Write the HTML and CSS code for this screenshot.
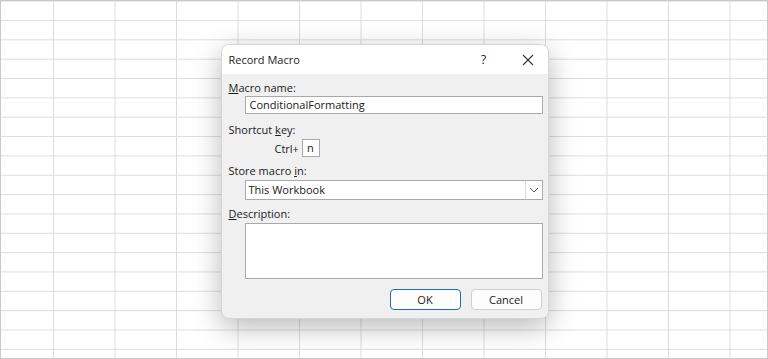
FILE: index.html
```html
<!DOCTYPE html>
<html lang="en">
<head>
    <meta charset="UTF-8">
    <meta name="viewport" content="width=device-width, initial-scale=1.0">
    <title>Record Macro</title>
    <link rel="stylesheet" href="styles.css">
</head>
<body>
    <div class="sheet">
        <!-- Record Macro dialog -->
        <div class="dialog">
            <div class="title-bar">
                <span class="title">Record Macro</span>
                <span class="help">?</span>
                <span class="close">
                    <svg width="12" height="12" viewBox="0 0 12 12">
                        <path d="M1 1 L11 11 M11 1 L1 11" stroke="#333" stroke-width="1.1" fill="none"/>
                    </svg>
                </span>
            </div>
            <div class="dialog-body">
                <label class="field-label"><u>M</u>acro name:</label>
                <div class="text-box">ConditionalFormatting</div>

                <label class="field-label gap">Shortcut <u>k</u>ey:</label>
                <div class="shortcut-row">
                    <span>Ctrl+</span>
                    <div class="key-box">n</div>
                </div>

                <label class="field-label gap-sm">Store macro <u>i</u>n:</label>
                <div class="select-box">
                    <span class="select-value">This Workbook</span>
                    <span class="select-arrow">
                        <svg width="10" height="6" viewBox="0 0 10 6">
                            <path d="M1 1 L5 5 L9 1" stroke="#666" stroke-width="1" fill="none"/>
                        </svg>
                    </span>
                </div>

                <label class="field-label gap-sm"><u>D</u>escription:</label>
                <div class="text-area"></div>

                <div class="buttons">
                    <button class="btn btn-default">OK</button>
                    <button class="btn">Cancel</button>
                </div>
            </div>
        </div>
    </div>
</body>
</html>
```

FILE: styles.css
```css
body {
    margin: 0;
    font-family: "Open Sans", "Noto Sans", sans-serif;
    font-size: 11px;
    color: #1a1a1a;
}
.sheet {
    width: 768px;
    height: 359px;
    box-sizing: border-box;
    border: 1px solid #c9c9c9;
    background-color: #fff;
    background-image:
        linear-gradient(to right, #dcdcdc 1px, transparent 1px),
        linear-gradient(to bottom, #dcdcdc 1px, transparent 1px);
    background-size: 61.5px 19.35px;
    background-position: 52px 19px;
    display: flex;
    justify-content: center;
    align-items: flex-start;
    padding-top: 43px;
    padding-left: 1px;
    overflow: hidden;
}
.dialog {
    width: 328px;
    height: 275px;
    background: #f0f0f0;
    border: 1px solid #d6d6d6;
    box-sizing: border-box;
    border-radius: 8px;
    box-shadow: 0 8px 28px rgba(0, 0, 0, 0.28);
    overflow: hidden;
    display: flex;
    flex-direction: column;
}
.title-bar {
    height: 29px;
    background: #fff;
    display: flex;
    align-items: center;
    padding-left: 7px;
}
.title {
    flex: 1;
}
.help {
    width: 44px;
    text-align: center;
    font-size: 12px;
}
.close {
    width: 44px;
    margin-right: -2px;
    display: flex;
    justify-content: center;
}
.dialog-body {
    flex: 1;
    display: flex;
    flex-direction: column;
    padding: 6px 5px 0 7px;
}
.field-label {
    line-height: 16px;
}
.field-label.gap {
    margin-top: 8px;
}
.field-label.gap-sm {
    margin-top: 6px;
}
.text-box {
    margin: 0 0 0 16px;
    height: 18px;
    box-sizing: border-box;
    border: 1px solid #a9a9a9;
    background: #fff;
    padding: 0 4px;
    line-height: 16px;
}
.shortcut-row {
    display: flex;
    align-items: center;
    gap: 3px;
    margin-left: 46px;
    margin-top: 1px;
}
.key-box {
    width: 18px;
    height: 18px;
    box-sizing: border-box;
    border: 1px solid #a9a9a9;
    background: #fff;
    line-height: 16px;
    padding-left: 4px;
}
.select-box {
    margin: 1px 0 0 16px;
    height: 20px;
    box-sizing: border-box;
    border: 1px solid #a9a9a9;
    background: #fff;
    display: flex;
}
.select-value {
    flex: 1;
    padding-left: 3px;
    line-height: 18px;
}
.select-arrow {
    width: 16px;
    border-left: 1px solid #dcdcdc;
    display: flex;
    align-items: center;
    justify-content: center;
}
.text-area {
    margin: 1px 0 0 16px;
    height: 56px;
    box-sizing: border-box;
    border: 1px solid #a9a9a9;
    background: #fff;
}
.buttons {
    display: flex;
    justify-content: flex-end;
    gap: 10px;
    margin-top: 10px;
    padding-right: 1px;
}
.btn {
    width: 71px;
    height: 21px;
    box-sizing: border-box;
    font-family: inherit;
    font-size: 11px;
    color: #1a1a1a;
    background: #fdfdfd;
    border: 1px solid #d0d0d0;
    border-radius: 4px;
    padding: 0;
}
.btn-default {
    border: 1px solid #1b6fc2;
}
```
